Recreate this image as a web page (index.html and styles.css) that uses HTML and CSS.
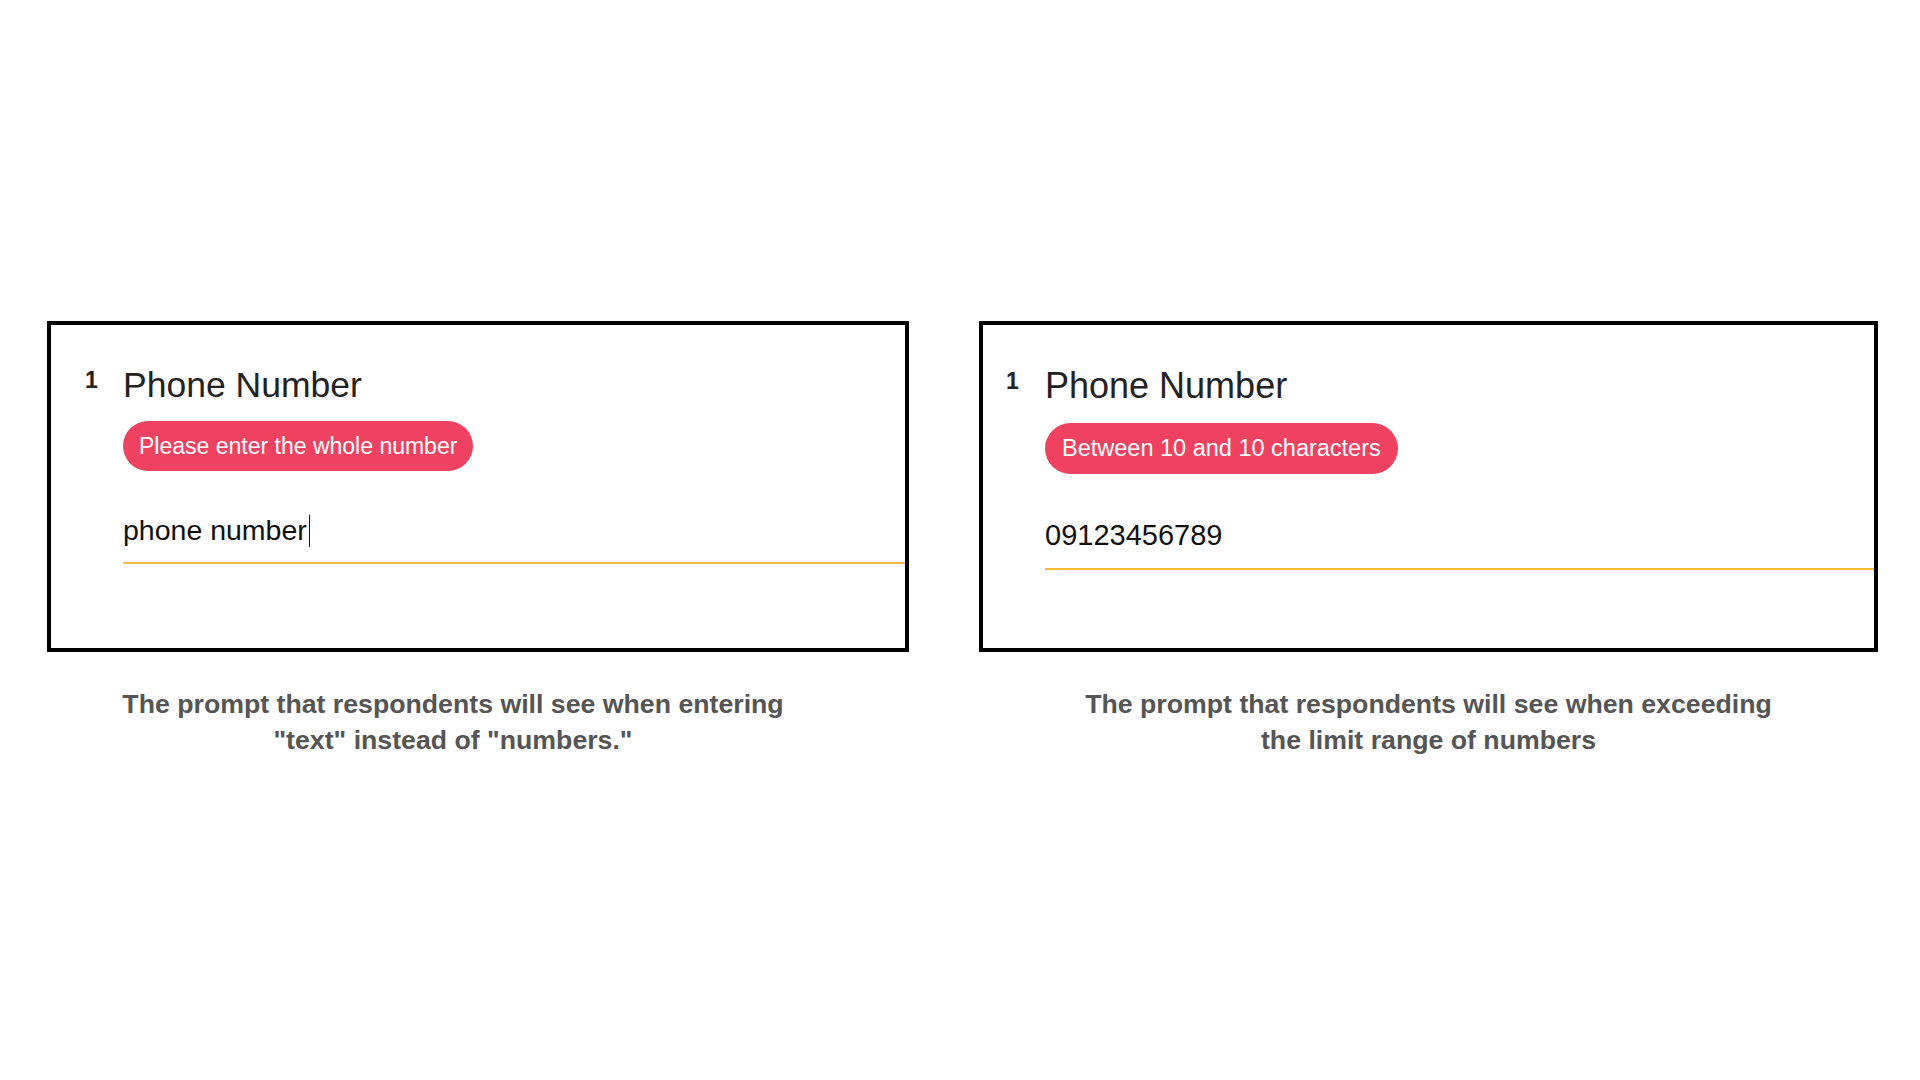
FILE: index.html
```html
<!DOCTYPE html>
<html lang="en">
<head>
<meta charset="utf-8">
<title>Phone Number validation prompts</title>
<link rel="stylesheet" href="styles.css">
</head>
<body>
<main class="page">
  <section class="col col--a">
    <div class="card card--a">
      <div class="qnum">1</div>
      <div class="qbody">
        <div class="title">Phone Number</div>
        <div class="badge">Please enter the whole number</div>
        <div class="field">phone number<span class="caret"></span></div>
      </div>
    </div>
    <p class="caption caption--a">The prompt that respondents will see when entering<br>"text" instead of "numbers."</p>
  </section>
  <section class="col col--b">
    <div class="card card--b">
      <div class="qnum">1</div>
      <div class="qbody">
        <div class="title">Phone Number</div>
        <div class="badge">Between 10 and 10 characters</div>
        <div class="field">09123456789</div>
      </div>
    </div>
    <p class="caption">The prompt that respondents will see when exceeding<br>the limit range of numbers</p>
  </section>
</main>
</body>
</html>
```

FILE: styles.css
```css
html, body {
  margin: 0;
  padding: 0;
  background: #ffffff;
}

body {
  font-family: "Liberation Sans", Arial, Helvetica, sans-serif;
  width: 1920px;
  height: 1080px;
  overflow: hidden;
}

.page {
  display: flex;
  align-items: flex-start;
  gap: 70px;
  padding: 321px 0 0 47px;
}

.col--a { width: 862px; }
.col--b { width: 899px; }

.card {
  box-sizing: border-box;
  height: 331px;
  border: 4px solid #000;
  display: grid;
  align-content: start;
}

.card--a {
  grid-template-columns: 38px 1fr;
  padding: 40px 0 0 34px;
}

.card--b {
  grid-template-columns: 39px 1fr;
  padding: 41px 0 0 23px;
}

.qnum {
  font-weight: 700;
  font-size: 23px;
  line-height: 24px;
  padding-top: 3px;
  color: #222;
}

.qbody {
  display: flex;
  flex-direction: column;
  align-items: flex-start;
}

.title {
  font-size: 35.5px;
  line-height: 40px;
  color: #222;
}

.badge {
  margin-top: 16px;
  height: 50px;
  line-height: 50px;
  padding: 0 16px;
  border-radius: 25px;
  background: #ee4260;
  color: #fff;
  font-size: 23px;
  white-space: nowrap;
}

.field {
  align-self: stretch;
  margin-top: 41px;
  font-size: 28.5px;
  line-height: 36px;
  padding-bottom: 14px;
  border-bottom: 2px solid #f6b93b;
  color: #111;
}

.card--b .title {
  font-size: 36px;
}

.card--b .badge {
  margin-top: 17px;
  height: 51px;
  line-height: 51px;
  padding: 0 17px;
  border-radius: 26px;
  font-size: 23.5px;
}

.card--b .field {
  margin-top: 43px;
  font-size: 29px;
  padding-bottom: 15px;
}

.caret {
  display: inline-block;
  width: 1.5px;
  height: 32px;
  margin-left: 2px;
  background: #111;
  vertical-align: -7px;
}

.caption {
  margin: 34px 0 0;
  font-weight: 700;
  font-size: 26.7px;
  line-height: 36px;
  color: #555;
  text-align: center;
}

.caption--a {
  padding-right: 50px;
}
```
